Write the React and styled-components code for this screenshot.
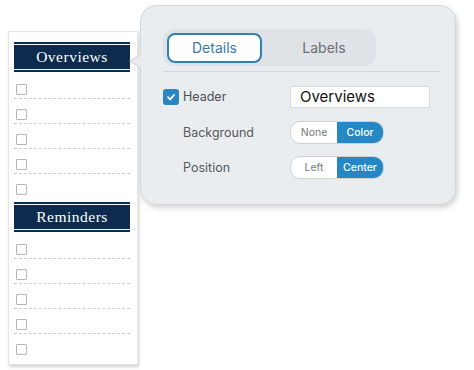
import React from "react";
import styled, { createGlobalStyle } from "styled-components";

const GlobalStyle = createGlobalStyle`
  body {
    margin: 0;
    background: #ffffff;
    font-family: Inter, "Noto Sans", sans-serif;
  }
`;

const Stage = styled.div`
  display: flex;
  align-items: flex-start;
  width: 474px;
  height: 370px;
  overflow: hidden;
`;

const PageCard = styled.div`
  margin: 31px 0 0 8px;
  width: 130px;
  height: 334px;
  box-sizing: border-box;
  padding: 10px 7px 0 5px;
  background: #fff;
  border: 1px solid #e2e4e6;
  box-shadow: 1px 2px 3px rgba(0, 0, 0, 0.18);
`;

const SectionHead = styled.div`
  border-top: 2px solid #0d2c4d;
  border-bottom: 2px solid #0d2c4d;
  padding: 1px 0;
  margin-top: ${(p) => (p.$first ? "0" : "3px")};
  margin-bottom: 2px;
`;

const SectionTitle = styled.div`
  height: 24px;
  background: #0d2c4d;
  color: #fff;
  font-family: "Liberation Serif", "DejaVu Serif", serif;
  font-size: 15.5px;
  letter-spacing: 0.5px;
  line-height: 24px;
  text-align: center;
`;

const ListRow = styled.div`
  height: 25px;
  box-sizing: border-box;
  padding: 10px 0 0 2px;
  border-bottom: ${(p) => (p.$last ? "none" : "1px dashed #c9cbcd")};
`;

const Box = styled.div`
  width: 11px;
  height: 11px;
  box-sizing: border-box;
  border: 1.5px solid #b4b6b8;
  border-radius: 1px;
`;

const Popover = styled.div`
  position: relative;
  margin: 5px 0 0 2px;
  width: 316px;
  height: 200px;
  box-sizing: border-box;
  padding: 23px 0 0 22px;
  background: #eaedf0;
  border: 1px solid #d3d7db;
  border-radius: 16px;
  box-shadow: 2px 3px 5px rgba(0, 0, 0, 0.16);

  &::before {
    content: "";
    position: absolute;
    left: -12px;
    top: 47px;
    border-style: solid;
    border-width: 8px 12px 8px 0;
    border-color: transparent #d3d7db transparent transparent;
  }
  &::after {
    content: "";
    position: absolute;
    left: -10px;
    top: 48px;
    border-style: solid;
    border-width: 7px 11px 7px 0;
    border-color: transparent #eaedf0 transparent transparent;
  }
`;

const Tabs = styled.div`
  display: flex;
  align-items: center;
  width: 213px;
  height: 37px;
  box-sizing: border-box;
  padding: 0 4px;
  background: #dfe3e8;
  border-radius: 12px;
`;

const Tab = styled.div`
  width: ${(p) => (p.$active ? "95px" : "110px")};
  height: 30px;
  box-sizing: border-box;
  display: flex;
  align-items: center;
  justify-content: center;
  padding-left: ${(p) => (p.$active ? "0" : "14px")};
  font-size: 14px;
  color: ${(p) => (p.$active ? "#3b79a8" : "#6b6e72")};
  background: ${(p) => (p.$active ? "#fff" : "transparent")};
  border: ${(p) => (p.$active ? "2px solid #2f80b6" : "none")};
  border-radius: 8px;
`;

const Divider = styled.div`
  margin: 5px 14px 0 0;
  height: 1px;
  background: #d3d7dc;
`;

const Form = styled.div`
  display: grid;
  grid-template-columns: 20px 107px 1fr;
  grid-auto-rows: 35.5px;
  align-items: center;
  margin-top: 7px;
`;

const Check = styled.div`
  width: 16px;
  height: 16px;
  border-radius: 3px;
  background: #2a86c1;
  display: flex;
  align-items: center;
  justify-content: center;
`;

const Label = styled.div`
  grid-column: 2;
  font-size: 12.5px;
  color: ${(p) => (p.$strong ? "#4b4e52" : "#55585c")};
`;

const TextInput = styled.div`
  width: 140px;
  height: 22px;
  box-sizing: border-box;
  padding-left: 9px;
  background: #fff;
  border: 1px solid #d7dadd;
  font-size: 15px;
  line-height: 20px;
  color: #111;
`;

const Segmented = styled.div`
  display: flex;
  width: 94px;
  height: 23px;
  box-sizing: border-box;
  border: 1px solid #cfd3d7;
  border-radius: 10px;
  overflow: hidden;
  background: #fff;
`;

const Segment = styled.div`
  flex: 1;
  display: flex;
  align-items: center;
  justify-content: center;
  font-size: 10.5px;
  font-weight: ${(p) => (p.$on ? 500 : 400)};
  color: ${(p) => (p.$on ? "#fff" : "#77797c")};
  background: ${(p) => (p.$on ? "#2587c3" : "transparent")};
`;

function Section({ title, first }) {
  return (
    <>
      <SectionHead $first={first}>
        <SectionTitle>{title}</SectionTitle>
      </SectionHead>
      {[0, 1, 2, 3, 4].map((i) => (
        <ListRow key={i} $last={i === 4}>
          <Box />
        </ListRow>
      ))}
    </>
  );
}

function Toggle({ left, right }) {
  return (
    <Segmented>
      <Segment>{left}</Segment>
      <Segment $on>{right}</Segment>
    </Segmented>
  );
}

export default function App() {
  return (
    <Stage>
      <GlobalStyle />
      <PageCard>
        <Section title="Overviews" first />
        <Section title="Reminders" />
      </PageCard>
      <Popover>
        <Tabs>
          <Tab $active>Details</Tab>
          <Tab>Labels</Tab>
        </Tabs>
        <Divider />
        <Form>
          <Check>
            <svg width="10" height="10" viewBox="0 0 10 10">
              <polyline points="2,5.2 4.2,7.3 8,3" fill="none" stroke="#fff" strokeWidth="1.8" strokeLinecap="round" strokeLinejoin="round" />
            </svg>
          </Check>
          <Label $strong>Header</Label>
          <TextInput>Overviews</TextInput>
          <Label>Background</Label>
          <Toggle left="None" right="Color" />
          <Label>Position</Label>
          <Toggle left="Left" right="Center" />
        </Form>
      </Popover>
    </Stage>
  );
}
